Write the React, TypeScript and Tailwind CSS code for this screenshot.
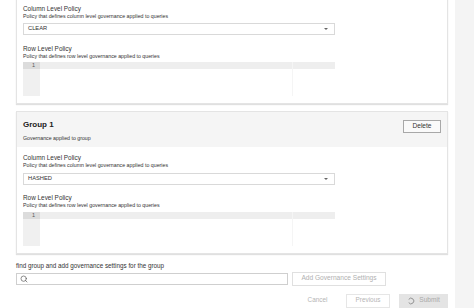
import { Search } from "lucide-react";

function PolicyField({ value }: { value: string }) {
  return (
    <div className="flex flex-col">
      <div className="text-[6.4px] leading-[9px] text-[#333]">Column Level Policy</div>
      <div className="text-[5.25px] leading-[7px] text-[#333]">
        Policy that defines column level governance applied to queries
      </div>
      <div className="mt-[3.5px] flex h-[12px] w-[312px] items-center justify-between border border-[#d9d9d9] bg-white pl-[4px] pr-[6px]">
        <span className="text-[5.75px] leading-none text-[#333]">{value}</span>
        <span className="h-0 w-0 border-x-[2px] border-t-[2.5px] border-x-transparent border-t-[#666]" />
      </div>

      <div className="mt-[8.5px] text-[6.4px] leading-[9px] text-[#333]">Row Level Policy</div>
      <div className="text-[5.25px] leading-[7px] text-[#333]">
        Policy that defines row level governance applied to queries
      </div>
      <div className="mt-[2.5px] flex h-[34px] w-[312px]">
        <div className="h-full w-[17px] bg-[#f0f0f0]">
          <div className="h-[7px] bg-[#dcdcdc] pr-[5px] text-right text-[5.5px] leading-[7px] text-[#555]">1</div>
        </div>
        <div className="relative flex-1">
          <div className="h-[7px] bg-[#eeeeee]" />
          <div className="absolute bottom-0 left-[252px] top-0 w-px bg-[#f5f5f5]" />
        </div>
      </div>
    </div>
  );
}

export default function App() {
  return (
    <div className="flex h-[308px] w-[474px] overflow-hidden bg-white font-['Liberation_Sans',Arial,sans-serif]">
      <div className="flex w-[455px] flex-col">
        <div className="-mt-[3.5px] ml-[16px] w-[432px] border border-[#e4e4e4] bg-white px-[6px] pb-[7px] pt-[6px] shadow-[0_1px_1px_rgba(0,0,0,0.12)]">
          <PolicyField value="CLEAR" />
        </div>

        <div className="ml-[16px] mt-[7px] w-[432px] border border-[#e4e4e4] bg-white shadow-[0_1px_1px_rgba(0,0,0,0.12)]">
          <div className="flex items-start justify-between bg-[#f5f5f5] px-[6px] pb-[5px] pt-[8px]">
            <div className="flex flex-col">
              <div className="text-[8px] font-bold leading-[10px] text-[#222]">Group 1</div>
              <div className="mt-[5px] text-[5.25px] leading-[7px] text-[#333]">Governance applied to group</div>
            </div>
            <button className="flex h-[13px] w-[38px] items-center justify-center border border-[#a8a8a8] bg-[#fafafa] text-[6.6px] leading-none text-[#333]">
              Delete
            </button>
          </div>
          <div className="px-[6px] pb-[7px] pt-[6px]">
            <PolicyField value="HASHED" />
          </div>
        </div>

        <div className="ml-[16px] mt-[8px] text-[6.3px] leading-[8px] text-[#333]">
          find group and add governance settings for the group
        </div>
        <div className="ml-[16px] mt-[2.5px] flex items-center gap-[4px]">
          <div className="flex h-[12.5px] w-[272px] items-center border border-[#cfcfcf] bg-white pl-[3px]">
            <Search size={8} strokeWidth={2} color="#555" />
          </div>
          <button className="flex h-[13.5px] w-[94px] items-center justify-center border border-[#e0e0e0] bg-white text-[6.6px] leading-none text-[#b0b0b0]">
            Add Governance Settings
          </button>
        </div>

        <div className="mr-[7px] mt-[8px] flex justify-end gap-[9px]">
          <button className="flex h-[14px] w-[39px] items-center justify-center text-[6.4px] leading-none text-[#b5b5b5]">
            Cancel
          </button>
          <button className="flex h-[14px] w-[44px] items-center justify-center border border-[#e6e6e6] bg-white text-[6.4px] leading-none text-[#b5b5b5]">
            Previous
          </button>
          <button className="flex h-[14px] w-[49px] items-center justify-center gap-[4px] bg-[#e4e4e4] text-[6.6px] leading-none text-[#aaaaaa]">
            <svg width="8" height="8" viewBox="0 0 10 10" fill="none" stroke="#888" strokeWidth="1.1">
              <path d="M2.13 2.99 A3.5 3.5 0 1 1 2.13 7.0" />
            </svg>
            Submit
          </button>
        </div>
      </div>
      <div className="h-full flex-1 bg-[#f4f4f4]" />
    </div>
  );
}
